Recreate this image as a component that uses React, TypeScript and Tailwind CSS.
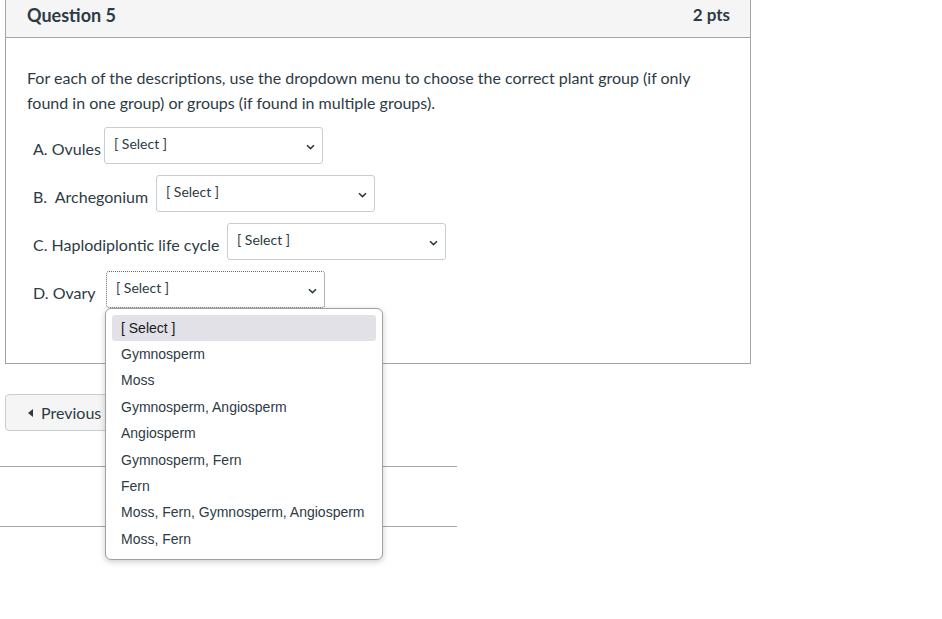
import React from 'react';

const OPTIONS = [
  '[ Select ]',
  'Gymnosperm',
  'Moss',
  'Gymnosperm, Angiosperm',
  'Angiosperm',
  'Gymnosperm, Fern',
  'Fern',
  'Moss, Fern, Gymnosperm, Angiosperm',
  'Moss, Fern',
];

function Chevron() {
  return (
    <svg width="9" height="6" viewBox="0 0 9 6" className="shrink-0">
      <path d="M1 1.2 L4.5 4.6 L8 1.2" fill="none" stroke="#2d3b45" strokeWidth="1.6" />
    </svg>
  );
}

function FakeSelect({ focused = false }: { focused?: boolean }) {
  return (
    <div
      className={
        focused
          ? 'flex h-[37px] w-[219px] items-start justify-between rounded-[3px] border border-dotted border-[#6b6b6b] pl-[9px] pr-[7px] pt-[6px]'
          : 'flex h-[37px] w-[219px] items-start justify-between rounded-[3px] border border-[#c7cdd1] pl-[9px] pr-[7px] pt-[6px]'
      }
    >
      <span className="text-[14px] leading-[20px]">[ Select ]</span>
      <span className="pt-[10px]">
        <Chevron />
      </span>
    </div>
  );
}

const ROWS = [
  { label: 'A. Ovules', w: 'w-[71px]' },
  { label: 'B.\u00a0 Archegonium', w: 'w-[123px]' },
  { label: 'C. Haplodiplontic life cycle', w: 'w-[194px]' },
  { label: 'D. Ovary', w: 'w-[73px]' },
];

export default function App() {
  return (
    <div
      className="relative h-[619px] w-[942px] overflow-hidden bg-white text-[#2d3b45]"
      style={{ fontFamily: 'Lato, "Liberation Sans", sans-serif' }}
    >
      {/* question card */}
      <div className="ml-[5px] w-[746px] border border-t-0 border-[#a5a5a5]">
        <div className="flex h-[38px] items-start justify-between border-b border-[#a5a5a5] bg-[#f5f5f5] pl-[21px] pr-[20px] pt-[3px]">
          <h2 className="text-[18px] font-bold leading-[24px]">Question 5</h2>
          <span className="text-[17px] font-bold leading-[24px]">2 pts</span>
        </div>

        <div className="pb-[55px] pl-[21px] pr-[21px] pt-[27px]">
          <p className="text-[16px] leading-[25px]">
            For each of the descriptions, use the dropdown menu to choose the correct plant group (if only found in one
            group) or groups (if found in multiple groups).
          </p>

          <div className="mt-[12px] flex flex-col gap-[11px] pl-[6px]">
            {ROWS.map((row, i) => (
              <div key={row.label} className="flex items-start">
                <span className={`${row.w} shrink-0 pt-[10px] text-[16px] leading-[24px] whitespace-pre`}>
                  {row.label}
                </span>
                <FakeSelect focused={i === 3} />
              </div>
            ))}
          </div>
        </div>
      </div>

      {/* footer nav */}
      <div className="mt-[30px] ml-[5px]">
        <button className="flex h-[37px] items-center gap-[8px] rounded-[4px] border border-[#c7cdd1] bg-[#f5f5f5] pl-[22px] pr-[14px] text-[16px] text-[#2d3b45]">
          <svg width="5" height="8" viewBox="0 0 5 8">
            <path d="M5 0 L0 4 L5 8 Z" fill="#2d3b45" />
          </svg>
          Previous
        </button>
      </div>
      <div className="mt-[35px] w-[457px] border-t border-[#a5a5a5]" />
      <div className="mt-[59px] w-[457px] border-t border-[#a5a5a5]" />

      {/* open dropdown list */}
      <ul
        className="absolute left-[105px] top-[308px] w-[278px] rounded-[6px] border border-[#a0a0a0] bg-white px-[6px] py-[6px] shadow-[0_2px_6px_rgba(0,0,0,0.2)]"
        style={{ fontFamily: '"Liberation Sans", Arial, sans-serif' }}
      >
        {OPTIONS.map((opt, i) => (
          <li
            key={opt}
            className={
              i === 0
                ? 'flex h-[26.4px] items-center rounded-[3px] bg-[#e1e1e7] pl-[9px] text-[14px] text-[#1a1a1a]'
                : 'flex h-[26.4px] items-center pl-[9px] text-[14px] text-[#2d3b45]'
            }
          >
            {opt}
          </li>
        ))}
      </ul>
    </div>
  );
}
